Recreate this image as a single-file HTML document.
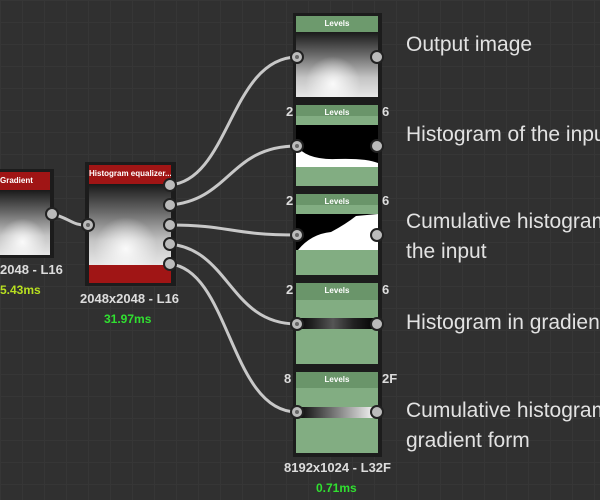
<!DOCTYPE html><html><head><style>
body{margin:0;width:600px;height:500px;overflow:hidden;background:#303030;font-family:"Liberation Sans",sans-serif;position:relative}
.grid{position:absolute;inset:0;background-image:linear-gradient(#363636 1px,transparent 1px),linear-gradient(90deg,#363636 1px,transparent 1px);background-size:22px 22px}
.a{position:absolute}
.t{position:absolute;color:#e2e2e2;font-size:21px;line-height:30px;white-space:nowrap}
.lbl{position:absolute;color:#ddd;font-weight:bold;font-size:13px;white-space:nowrap}
.ms{position:absolute;font-weight:bold;font-size:12px}
.hd{position:absolute;color:#fff;font-weight:bold;font-size:8px;text-align:center;white-space:nowrap;overflow:hidden}
.noise{background:radial-gradient(circle at 45% 80%,rgba(255,255,255,.9) 0,rgba(255,255,255,0) 40%),linear-gradient(#1a1a1a,#6a6a6a 35%,#c4c4c4 70%,#e6e6e6)}
</style></head><body><div class="grid"></div>
<div class="a" style="left:0;top:169px;width:54px;height:89px;background:#1c1c1c"></div>
<div class="a" style="left:0;top:172px;width:50px;height:18px;background:#a01515"></div>
<div class="hd" style="left:0;top:176px;width:40px;text-align:left">Gradient</div>
<div class="a noise" style="left:0;top:190px;width:50px;height:65px"></div>
<div class="lbl" style="left:0;top:262px">2048 - L16</div>
<div class="ms" style="left:0;top:283px;color:#b8e020">5.43ms</div>
<div class="a" style="left:85px;top:162px;width:91px;height:124px;background:#1c1c1c"></div>
<div class="a" style="left:89px;top:165px;width:82px;height:19px;background:#a01515"></div>
<div class="hd" style="left:89px;top:169px;width:82px;font-size:8px">Histogram equalizer...</div>
<div class="a noise" style="left:89px;top:184px;width:82px;height:81px"></div>
<div class="a" style="left:89px;top:265px;width:82px;height:18px;background:#a01515"></div>
<div class="lbl" style="left:80px;top:291px">2048x2048 - L16</div>
<div class="ms" style="left:104px;top:312px;color:#30e030">31.97ms</div>
<div class="a" style="left:293px;top:13px;width:89px;height:444px;background:#1c1c1c"></div>
<div class="a" style="left:296px;top:16px;width:82px;height:16px;background:#6d9a6d"></div><div class="hd" style="left:296px;top:19px;width:82px">Levels</div>
<div class="a noise" style="left:296px;top:32px;width:82px;height:65px"></div>
<div class="a" style="left:296px;top:105px;width:82px;height:20px;background:linear-gradient(#6a956a 55%,#82ad82 55%)"></div><div class="hd" style="left:296px;top:108px;width:82px">Levels</div>
<div class="a" style="left:296px;top:125px;width:82px;height:42px;background:#000"></div>
<svg class="a" style="left:296px;top:125px" width="82" height="42"><path d="M0 20 Q10 35 40 34 T82 38 V42 H0Z" fill="#fff"/></svg>
<div class="a" style="left:296px;top:167px;width:82px;height:19px;background:#82ad82"></div>
<div class="a" style="left:296px;top:194px;width:82px;height:20px;background:linear-gradient(#6a956a 55%,#82ad82 55%)"></div><div class="hd" style="left:296px;top:197px;width:82px">Levels</div>
<div class="a" style="left:296px;top:214px;width:82px;height:36px;background:#000"></div>
<svg class="a" style="left:296px;top:214px" width="82" height="36"><path d="M2 36 Q15 20 35 18 Q50 10 60 2 L82 0 V36Z" fill="#fff"/></svg>
<div class="a" style="left:296px;top:250px;width:82px;height:25px;background:#82ad82"></div>
<div class="a" style="left:296px;top:283px;width:82px;height:81px;background:#82ad82"></div>
<div class="a" style="left:296px;top:283px;width:82px;height:17px;background:#6a956a"></div><div class="hd" style="left:296px;top:286px;width:82px">Levels</div>
<div class="a" style="left:296px;top:318px;width:82px;height:11px;background:linear-gradient(90deg,#000,#222 20%,#555 45%,#222 70%,#000)"></div>
<div class="a" style="left:296px;top:372px;width:82px;height:81px;background:#82ad82"></div>
<div class="a" style="left:296px;top:372px;width:82px;height:16px;background:#6a956a"></div><div class="hd" style="left:296px;top:375px;width:82px">Levels</div>
<div class="a" style="left:296px;top:407px;width:82px;height:11px;background:linear-gradient(90deg,#000,#fff)"></div>
<div class="lbl" style="left:286px;top:104px">2</div><div class="lbl" style="left:382px;top:104px">6</div>
<div class="lbl" style="left:286px;top:193px">2</div><div class="lbl" style="left:382px;top:193px">6</div>
<div class="lbl" style="left:286px;top:282px">2</div><div class="lbl" style="left:382px;top:282px">6</div>
<div class="lbl" style="left:284px;top:371px">8</div><div class="lbl" style="left:382px;top:371px">2F</div>
<div class="lbl" style="left:284px;top:460px">8192x1024 - L32F</div>
<div class="ms" style="left:316px;top:481px;color:#30e030">0.71ms</div>
<svg class="a" style="left:0;top:0" width="600" height="500" fill="none" stroke="#c8c8c8" stroke-width="3">
<path d="M52 214 C70 218 72 226 88 225"/>
<path d="M170 185 C230 180 230 58 297 57"/>
<path d="M170 205 C230 200 230 146 297 146"/>
<path d="M170 225 C230 225 230 235 297 235"/>
<path d="M170 244 C230 250 230 324 297 324"/>
<path d="M170 264 C230 270 230 412 297 412"/>
<g fill="#bbb" stroke="#222" stroke-width="2">
<circle cx="52" cy="214" r="6"/><circle cx="88" cy="225" r="6"/>
<circle cx="170" cy="185" r="6"/><circle cx="170" cy="205" r="6"/><circle cx="170" cy="225" r="6"/><circle cx="170" cy="244" r="6"/><circle cx="170" cy="264" r="6"/>
<circle cx="297" cy="57" r="6"/><circle cx="377" cy="57" r="6"/>
<circle cx="297" cy="146" r="6"/><circle cx="377" cy="146" r="6"/>
<circle cx="297" cy="235" r="6"/><circle cx="377" cy="235" r="6"/>
<circle cx="297" cy="324" r="6"/><circle cx="377" cy="324" r="6"/>
<circle cx="297" cy="412" r="6"/><circle cx="377" cy="412" r="6"/>
</g>
<g fill="#666" stroke="none"><circle cx="88" cy="225" r="2"/><circle cx="297" cy="57" r="2"/><circle cx="297" cy="146" r="2"/><circle cx="297" cy="235" r="2"/><circle cx="297" cy="324" r="2"/><circle cx="297" cy="412" r="2"/></g>
</svg>
<div class="t" style="left:406px;top:30px">Output image</div>
<div class="t" style="left:406px;top:120px">Histogram of the input</div>
<div class="t" style="left:406px;top:207px">Cumulative histogram of<br>the input</div>
<div class="t" style="left:406px;top:308px">Histogram in gradient form</div>
<div class="t" style="left:406px;top:396px">Cumulative histogram in<br>gradient form</div>
</body></html>
